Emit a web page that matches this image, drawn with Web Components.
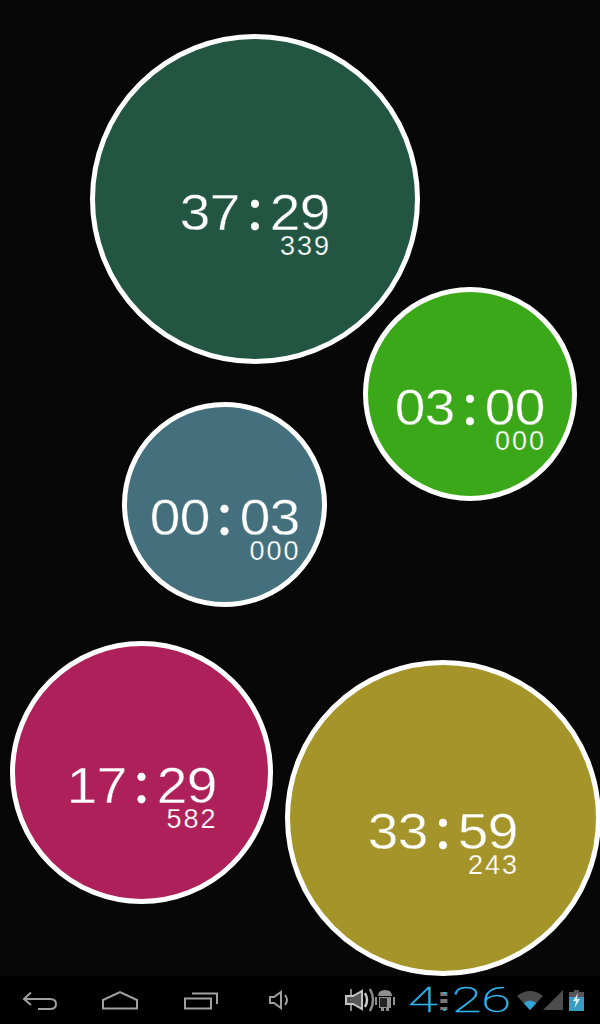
<!DOCTYPE html>
<html>
<head>
<meta charset="utf-8">
<title>Timers</title>
<style>
html, body { margin: 0; height: 100%; background: #070707; }
body { display: flex; flex-direction: column; width: 600px; height: 1024px; overflow: hidden; }
</style>
</head>
<body>
<bubble-field>
  <timer-bubble x="90" y="34" size="330" color="#225643" time="37:29" ms="339"></timer-bubble>
  <timer-bubble x="363" y="287" size="214" color="#3ba81a" time="03:00" ms="000"></timer-bubble>
  <timer-bubble x="122" y="402" size="205" color="#44707d" time="00:03" ms="000"></timer-bubble>
  <timer-bubble x="10" y="641" size="263" color="#ae2059" time="17:29" ms="582"></timer-bubble>
  <timer-bubble x="285" y="660" size="316" color="#a5942a" time="33:59" ms="243"></timer-bubble>
</bubble-field>
<system-bar time="4:26"></system-bar>
<script>
const fieldTemplate = document.createElement("template");
fieldTemplate.innerHTML = `
<style>
:host { display: block; position: relative; flex: 1; background: #070707; }
</style>
<slot></slot>`;

class BubbleField extends HTMLElement {
  constructor() {
    super();
    this.attachShadow({ mode: "open" });
    this.shadowRoot.appendChild(fieldTemplate.content.cloneNode(true));
  }
}
customElements.define("bubble-field", BubbleField);

const bubbleTemplate = document.createElement("template");
bubbleTemplate.innerHTML = `
<style>
:host {
  position: absolute;
  display: flex;
  justify-content: center;
  align-items: center;
  box-sizing: border-box;
  border: 5px solid #fff;
  border-radius: 50%;
  color: #fff;
  font-family: "Liberation Sans", Arial, sans-serif;
}
.readout { display: flex; flex-direction: column; align-items: flex-end; width: 150px; padding-top: 50px; }
.time {
  display: flex;
  align-items: baseline;
  height: 43px;
  font-size: 50px;
  line-height: 44px;
  -webkit-text-stroke: 0.4px var(--fill);
}
.time span { display: block; width: 30px; text-align: center; transform: scaleX(1.1); }
.time .colon {
  font-family: Lato, sans-serif;
  font-size: 60px;
  line-height: 32.300px;
  transform: none;
  -webkit-text-stroke: 0.5px #fff;
}
.ms { font-size: 27px; line-height: 24px; letter-spacing: 2px; margin-right: -1px; -webkit-text-stroke: 0.25px var(--fill); }
</style>
<div class="readout">
  <div class="time"></div>
  <div class="ms"></div>
</div>`;

class TimerBubble extends HTMLElement {
  constructor() {
    super();
    this.attachShadow({ mode: "open" });
    this.shadowRoot.appendChild(bubbleTemplate.content.cloneNode(true));
  }

  connectedCallback() {
    this.style.left = this.getAttribute("x") + "px";
    this.style.top = this.getAttribute("y") + "px";
    this.style.width = this.style.height = this.getAttribute("size") + "px";
    this.style.background = this.getAttribute("color");
    this.style.setProperty("--fill", this.getAttribute("color"));
    const time = this.shadowRoot.querySelector(".time");
    time.innerHTML = "";
    for (const ch of this.getAttribute("time")) {
      const cell = document.createElement("span");
      cell.textContent = ch;
      if (ch === ":") cell.className = "colon";
      time.appendChild(cell);
    }
    this.shadowRoot.querySelector(".ms").textContent = this.getAttribute("ms");
  }
}
customElements.define("timer-bubble", TimerBubble);

const barTemplate = document.createElement("template");
barTemplate.innerHTML = `
<style>
:host { display: flex; align-items: center; flex: none; height: 48px; background: #000; }
svg { display: block; flex: none; }
.keys { display: flex; align-items: center; }
.status { display: flex; align-items: center; margin-left: auto; padding-right: 16px; }
.clock { display: block; width: 108px; height: 48px; margin-left: 14px; overflow: visible; }
.digits {
  display: inline-block;
  color: #33b5e5;
  font: 100 35px/50px Roboto, sans-serif;
  -webkit-text-stroke: 0.45px #33b5e5;
  transform: scaleX(1.54);
  transform-origin: left center;
  white-space: nowrap;
  margin-left: -1px;
}
.colon {
  display: inline-block;
  width: 9.4px;
  text-align: center;
  -webkit-text-stroke: 0;
  background: linear-gradient(#777 0 0) 2px 16px / 4.6px 4px no-repeat,
              linear-gradient(#777 0 0) 2px 23px / 4.6px 4px no-repeat,
              linear-gradient(#777 0 0) 2px 31px / 4.6px 3px no-repeat;
  line-height: 48px;
  height: 48px;
  vertical-align: top;
}
</style>
<div class="keys">
  <svg width="36" height="22" viewBox="0 0 36 22" style="margin-left:22px" fill="none" stroke="#a0a0a0" stroke-width="2">
    <path d="M9 3.500 2 10 9 16M2 10H28Q34 10 34 15T28 20H16"/>
  </svg>
  <svg width="38" height="20" viewBox="0 0 38 20" style="margin-left:43px" fill="none" stroke="#a0a0a0" stroke-width="2">
    <path d="M2 18.500V10L19 2.200 36 10V18.500Z"/>
  </svg>
  <svg width="36" height="20" viewBox="0 0 36 20" style="margin-left:44px" fill="none" stroke="#a0a0a0" stroke-width="2">
    <path d="M2 8.500H28V18.500H2ZM9 3.500H34V14"/>
  </svg>
  <svg width="24" height="20" viewBox="0 0 24 20" style="margin-left:49px" fill="none" stroke="#a0a0a0" stroke-width="2">
    <path d="M2 7V13H6L13 18V2L6 7ZM17 5Q21 10 17 15"/>
  </svg>
</div>
<div class="status">
  <svg width="50" height="24" viewBox="0 0 50 24">
    <path d="M6 1V23" stroke="#8a8a8a" stroke-width="2"/>
    <path d="M1 8H8L17 3V21L8 16H1Z" fill="#555" stroke="#c4c4c4" stroke-width="2"/>
    <path d="M20 5Q24 12 20 19" fill="none" stroke="#c8c8c8" stroke-width="2.500"/>
    <path d="M25 1Q31 12 25 23" fill="none" stroke="#8c8c8c" stroke-width="2.500"/>
    <path d="M33 8Q33 2 40 2T47 8Z" fill="#8f8f8f"/>
    <path d="M30 9H32V17H30ZM48 9H50V17H48ZM34 9H46V20H44V23H41V20H39V23H36V20H34Z" fill="#8f8f8f"/>
    <path d="M35 10H42V19H35Z" fill="#242424"/>
  </svg>
  <span class="clock"><span class="digits"></span></span>
  <svg width="26" height="20" viewBox="0 0 26 20"><path d="M0 6Q13-4 26 6L13 20Z" fill="#4a4a4a"/><path d="M6.500 13Q13 8 19.500 13L13 20Z" fill="#33a5d5"/></svg>
  <svg width="20" height="20" viewBox="0 0 20 20"><path d="M20 0V20H0Z" fill="#4d4d4d"/></svg>
  <svg width="15" height="21" viewBox="0 0 15 21" style="margin-left:6px"><path d="M5 0H10V2H15V21H0V2H5Z" fill="#3a9cc4"/><path d="M5 0H10V2H15V7H0V2H5Z" fill="#555"/><path d="M9 3 4 11H7L5.500 18 11 9H8Z" fill="#d8eef6"/></svg>
</div>`;

class SystemBar extends HTMLElement {
  constructor() {
    super();
    this.attachShadow({ mode: "open" });
    this.shadowRoot.appendChild(barTemplate.content.cloneNode(true));
    const [h, m] = this.getAttribute("time").split(":");
    const digits = this.shadowRoot.querySelector(".digits");
    digits.append(h);
    const colon = document.createElement("span");
    colon.className = "colon";
    colon.textContent = ":";
    digits.append(colon, m);
  }
}
customElements.define("system-bar", SystemBar);
</script>
</body>
</html>
